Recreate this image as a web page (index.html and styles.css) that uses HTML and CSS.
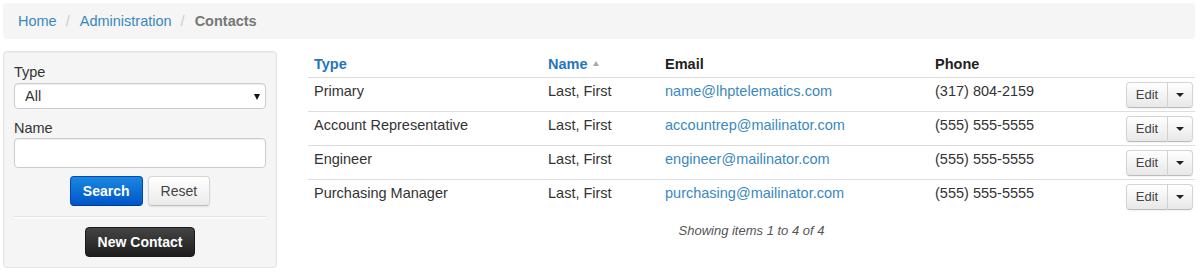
FILE: index.html
```html
<!DOCTYPE html>
<html>
<head>
<meta charset="utf-8">
<title>Contacts</title>
<link rel="stylesheet" href="styles.css">
</head>
<body>
<div class="page">
  <ul class="breadcrumb">
    <li><a href="#">Home</a><span class="sep">/</span></li>
    <li><a href="#">Administration</a><span class="sep">/</span></li>
    <li class="active">Contacts</li>
  </ul>
  <div class="main">
    <aside class="well">
      <label class="lbl">Type</label>
      <div class="select-wrap">
        <select class="field select"><option>All</option></select>
      </div>
      <label class="lbl lbl-name">Name</label>
      <input class="field input" type="text">
      <div class="btn-row">
        <button class="btn btn-primary">Search</button>
        <button class="btn btn-default">Reset</button>
      </div>
      <hr class="divider">
      <div class="btn-row btn-row-new">
        <button class="btn btn-inverse">New Contact</button>
      </div>
    </aside>
    <section class="content">
      <table class="grid">
        <colgroup>
          <col class="c-type"><col class="c-name"><col class="c-email"><col class="c-phone"><col class="c-act">
        </colgroup>
        <thead>
          <tr>
            <th><a href="#" class="sort">Type</a></th>
            <th><a href="#" class="sort">Name</a><span class="sort-up"></span></th>
            <th>Email</th>
            <th>Phone</th>
            <th></th>
          </tr>
        </thead>
        <tbody>
          <tr>
            <td>Primary</td><td>Last, First</td><td><a href="#">name@lhptelematics.com</a></td><td>(317) 804-2159</td>
            <td class="act"><div class="btn-group"><button class="sbtn sbtn-main">Edit</button><button class="sbtn sbtn-caret"><span class="caret"></span></button></div></td>
          </tr>
          <tr>
            <td>Account Representative</td><td>Last, First</td><td><a href="#">accountrep@mailinator.com</a></td><td>(555) 555-5555</td>
            <td class="act"><div class="btn-group"><button class="sbtn sbtn-main">Edit</button><button class="sbtn sbtn-caret"><span class="caret"></span></button></div></td>
          </tr>
          <tr>
            <td>Engineer</td><td>Last, First</td><td><a href="#">engineer@mailinator.com</a></td><td>(555) 555-5555</td>
            <td class="act"><div class="btn-group"><button class="sbtn sbtn-main">Edit</button><button class="sbtn sbtn-caret"><span class="caret"></span></button></div></td>
          </tr>
          <tr>
            <td>Purchasing Manager</td><td>Last, First</td><td><a href="#">purchasing@mailinator.com</a></td><td>(555) 555-5555</td>
            <td class="act"><div class="btn-group"><button class="sbtn sbtn-main">Edit</button><button class="sbtn sbtn-caret"><span class="caret"></span></button></div></td>
          </tr>
        </tbody>
      </table>
      <p class="pager-info">Showing items 1 to 4 of 4</p>
    </section>
  </div>
</div>
</body>
</html>
```

FILE: styles.css
```css
* { box-sizing: border-box; }
html, body { margin: 0; padding: 0; background: #fff; }
body {
  font-family: "Liberation Sans", Arial, Helvetica, sans-serif;
  font-size: 14.5px;
  line-height: 20px;
  color: #333;
}
a { color: #3a88bd; text-decoration: none; }

.page { padding: 3px 5px 0 3px; }

.breadcrumb {
  list-style: none;
  margin: 0;
  height: 36px;
  padding: 8px 15px;
  background: #f5f5f5;
  border-radius: 4px;
  display: flex;
}
.breadcrumb li { display: flex; }
.breadcrumb .sep { color: #ccc; padding: 0 10px 0 9px; }
.breadcrumb .active { color: #777; font-weight: bold; }

.main {
  display: flex;
  gap: 31px;
  margin-top: 12px;
  align-items: flex-start;
}

.well {
  width: 274px;
  flex: none;
  background: #f5f5f5;
  border: 1px solid #e3e3e3;
  border-radius: 4px;
  padding: 10px;
  box-shadow: inset 0 1px 1px rgba(0,0,0,0.04);
  display: flex;
  flex-direction: column;
}
.lbl { display: block; margin-bottom: 1px; color: #333; }
.lbl-name { margin-top: 9px; margin-bottom: 0; }

.field {
  width: 100%;
  font-family: inherit;
  font-size: 14.5px;
  color: #555;
  background: #fff;
  border: 1px solid #ccc;
  border-radius: 4px;
  box-shadow: inset 0 1px 1px rgba(0,0,0,0.075);
}
.select-wrap { position: relative; }
.select {
  display: block;
  height: 26px;
  padding: 0 10px;
  -webkit-appearance: none;
  appearance: none;
  color: #333;
  outline: none;
}
.select-wrap::after {
  content: "";
  position: absolute;
  right: 6px;
  top: 11px;
  border-left: 3.5px solid transparent;
  border-right: 3.5px solid transparent;
  border-top: 6px solid #111;
}
.input { display: block; height: 30px; padding: 4px 6px; }

.btn-row {
  display: flex;
  justify-content: center;
  gap: 5px;
  margin-top: 8px;
}
.btn {
  font-family: inherit;
  font-size: 14px;
  line-height: 20px;
  padding: 4px 12px;
  border-radius: 4px;
  border: 1px solid #ccc;
  cursor: pointer;
}
.btn-primary {
  color: #fff;
  font-weight: bold;
  background: linear-gradient(#1a88e0, #0055c8);
  border-color: #0048b8 #0048b8 #003a99;
}
.btn-default {
  color: #444;
  background: linear-gradient(#fff, #ebebeb);
  border-color: #d6d6d6 #d6d6d6 #bdbdbd;
  box-shadow: 0 1px 2px rgba(0,0,0,0.08);
}
.btn-inverse {
  color: #fff;
  font-weight: bold;
  background: linear-gradient(#444, #1e1e1e);
  border-color: #1a1a1a;
}
.divider {
  width: 100%;
  margin: 10px 0 0;
  border: 0;
  border-top: 1px solid #e2e2e2;
  border-bottom: 1px solid #fff;
}
.btn-row-new { margin-top: 9px; }

.content { flex: 1; min-width: 0; }
.grid {
  width: 100%;
  border-collapse: collapse;
  table-layout: fixed;
}
.c-type { width: 234px; }
.c-name { width: 117px; }
.c-email { width: 270px; }
.c-phone { width: 190px; }
.c-act { width: 76px; }

.grid th {
  text-align: left;
  font-weight: bold;
  color: #222;
  padding: 3px 6px 2px;
  border-bottom: 1px solid #ddd;
  height: 26px;
}
.grid th .sort { color: #1f77bd; }
.sort-up {
  display: inline-block;
  margin-left: 5px;
  vertical-align: 3px;
  border-left: 3.5px solid transparent;
  border-right: 3.5px solid transparent;
  border-bottom: 5px solid #aaa;
}
.grid td {
  padding: 3px 6px 4px;
  vertical-align: top;
  border-top: 1px solid #ddd;
  white-space: nowrap;
}
.grid tbody tr:first-child td { border-top: 0; }
.grid td.act { padding: 4px 2px 3px 0; }
.btn-group { display: flex; justify-content: flex-end; }
.sbtn {
  font-family: inherit;
  font-size: 13px;
  line-height: 18px;
  height: 26px;
  color: #444;
  background: linear-gradient(#fff, #e8e8e8);
  border: 1px solid #d4d4d4;
  border-bottom-color: #bbb;
  box-shadow: 0 1px 2px rgba(0,0,0,0.06);
  cursor: pointer;
}
.sbtn-main {
  width: 42px;
  padding: 3px 0;
  border-radius: 4px 0 0 4px;
}
.sbtn-caret {
  width: 25px;
  padding: 0;
  border-left: 0;
  border-radius: 0 4px 4px 0;
  display: flex;
  align-items: center;
  justify-content: center;
}
.caret {
  display: block;
  border-left: 4px solid transparent;
  border-right: 4px solid transparent;
  border-top: 4px solid #222;
}
.pager-info {
  margin: 8px 0 0;
  text-align: center;
  font-style: italic;
  color: #555;
  font-size: 13px;
}
```
